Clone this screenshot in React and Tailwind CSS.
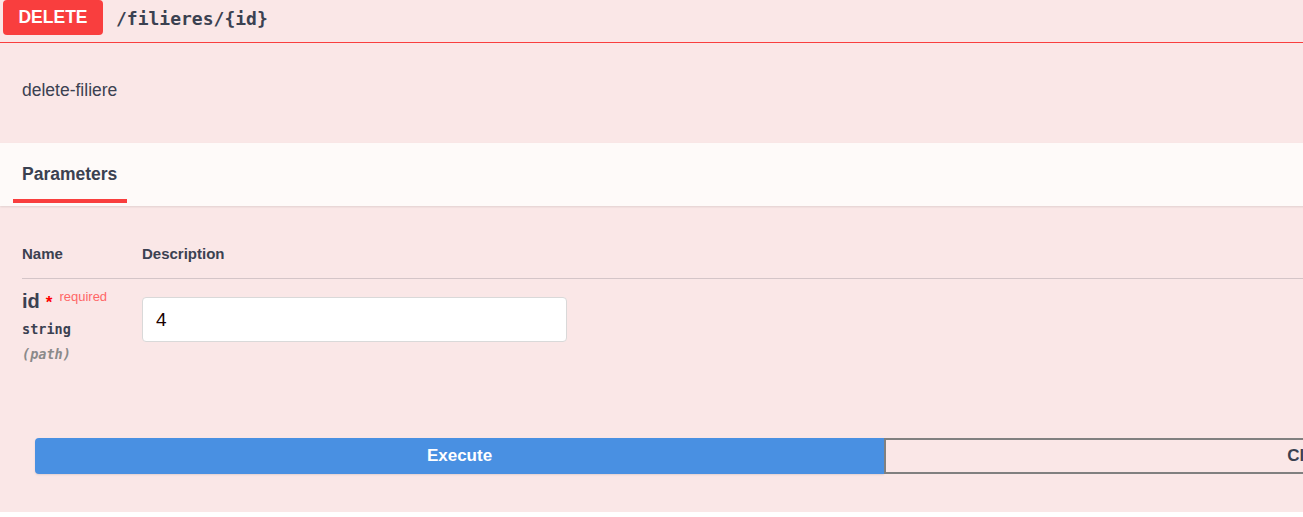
import React from 'react';

const mono = { fontFamily: '"DejaVu Sans Mono", monospace' };

export default function App() {
    return (
        <div className="w-[1303px] h-[517px] overflow-hidden bg-white" style={{ fontFamily: '"Liberation Sans", Arial, sans-serif' }}>
            <div className="w-[1768px] bg-[#fae7e7] text-[#3b4151]">
                {/* summary */}
                <div className="h-[43px] flex items-start border-b border-[#f93e3e] pl-[3px]">
                    <div className="w-[100px] h-[35px] rounded-[4px] bg-[#f93e3e] text-white font-bold text-[17.5px] flex items-center justify-center">DELETE</div>
                    <div className="ml-[13px] h-[36px] flex items-center text-[18px] font-bold" style={mono}>/filieres/{'{id}'}</div>
                </div>

                {/* description */}
                <div className="h-[100px] flex items-center pl-[22px] pb-[6px] text-[17.5px]">delete-filiere</div>

                {/* tab header */}
                <div className="h-[63px] bg-[#fefaf9] shadow-[0_1px_2px_rgba(0,0,0,0.1)] pl-[13px]">
                    <div className="w-[114px] h-[60px] border-b-4 border-[#f93e3e] pt-[20px] pl-[9px] text-[17.5px] leading-[22px] font-bold">Parameters</div>
                </div>

                {/* table */}
                <div className="pl-[22px] pt-[39px]">
                    <div className="flex text-[15px] leading-[18px] font-bold h-[34px] border-b border-[#3b415133] w-[1746px]">
                        <div className="w-[120px]">Name</div>
                        <div>Description</div>
                    </div>
                    <div className="flex">
                        <div className="w-[120px] pt-[10px]">
                            <div className="flex items-start h-[24px]">
                                <span className="text-[20px] font-bold leading-[24px]">id</span>
                                <span className="text-[#ff0000] text-[17px] font-bold ml-[6px] mt-[6px] leading-[16px]">*</span>
                                <span className="text-[#ff6666] text-[13px] ml-[7px] mt-[0px] leading-[16px]">required</span>
                            </div>
                            <div className="text-[13.5px] leading-[16px] font-bold mt-[8px]" style={mono}>string</div>
                            <div className="text-[13.5px] leading-[16px] font-bold italic text-[#8a8a8a] mt-[9px]" style={mono}>(path)</div>
                        </div>
                        <div className="pt-[18px]">
                            <input
                                className="w-[425px] h-[45px] bg-white border border-[#d9d9d9] rounded-[4px] px-[13px] text-[19px] text-[#1a0000] outline-none"
                                defaultValue="4"
                                style={{ fontFamily: '"Liberation Sans", Arial, sans-serif' }}
                            />
                        </div>
                    </div>
                </div>

                {/* buttons */}
                <div className="pl-[35px] pt-[76px] pb-[38px] flex">
                    <button className="w-[849px] h-[36px] bg-[#4990e2] text-white font-bold text-[17px] rounded-l-[4px] shadow-[0_1px_2px_rgba(0,0,0,0.1)]">Execute</button>
                    <button className="w-[849px] h-[36px] border-2 border-[#808080] text-[#3b4151] font-bold text-[17px] rounded-r-[4px]">Clear</button>
                </div>
            </div>
        </div>
    );
}
